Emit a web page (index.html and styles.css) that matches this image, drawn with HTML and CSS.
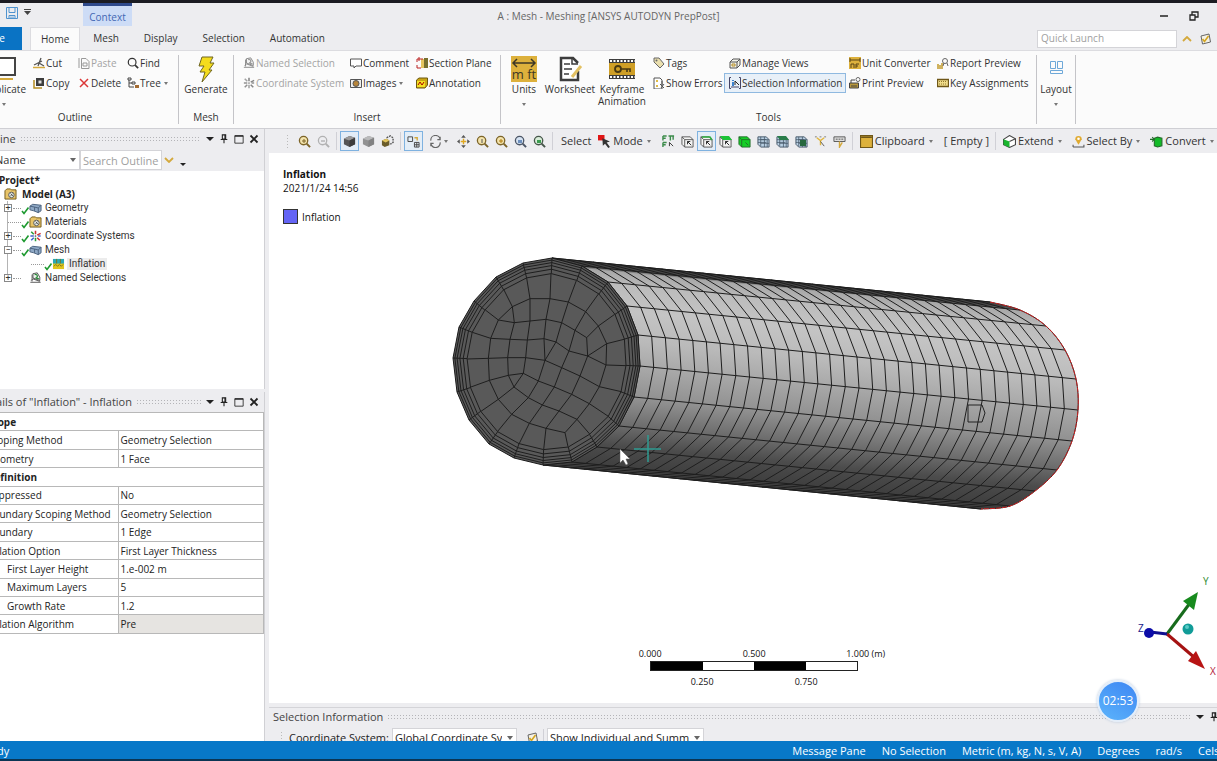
FILE: index.html
```
<!DOCTYPE html>
<html lang="en">
<head>
    <meta charset="UTF-8">
    <meta name="viewport" content="width=device-width, initial-scale=1.0">
    <title>A : Mesh - Meshing</title>
    <link rel="stylesheet" href="styles.css">
</head>
<body>
    <!-- Shared icons -->
    <svg class="sprite" aria-hidden="true">
        <symbol id="i-lens" viewBox="0 0 14 14"><circle cx="6" cy="6" r="4.500" stroke="currentColor" stroke-width="1.400"/><path d="M9.400 9.400L13 13" stroke="currentColor" stroke-width="2"/></symbol>
        <symbol id="i-cube" viewBox="0 0 14 14"><path d="M1 4l6-3 6 2v7l-6 3-6-3z" fill="#555"/><path d="M1 4l6-3 6 2-6 3z" fill="#999"/><path d="M7 6l6-3v7l-6 3z" fill="#3c3c3c"/></symbol>
        <symbol id="i-pin" viewBox="0 0 10 12"><path d="M3 1h4v5H3zM1 6.500h8M5 7v4" fill="none" stroke="#222" stroke-width="1.300"/><path d="M5.500 1h1.500v5H5.500z" fill="#222"/></symbol>
        <symbol id="i-box" viewBox="0 0 12 12"><path d="M1 2h10v9H1z" fill="none" stroke="#222"/><path d="M1 2.500h10" stroke="#222" stroke-width="1.500"/></symbol>
        <symbol id="i-x" viewBox="0 0 10 10"><path d="M1.500 1.500l7 7M8.500 1.500l-7 7" stroke="#222" stroke-width="1.800"/></symbol>
        <symbol id="i-selbox" viewBox="0 0 14 14"><path d="M1 2h9l3 3v8H4L1 10z" fill="#f4f4f4" stroke="#555"/><path d="M1 2l3 3h9M4 5v8" fill="none" stroke="#555"/><path d="M7 7l4 4M7 7v3M7 7h3" stroke="#222" fill="none"/></symbol>
        <symbol id="i-mesh" viewBox="0 0 14 14"><path d="M1 2h9l3 3v8H4L1 10z" fill="#b9cfe2" stroke="#456"/><path d="M1 5h9M1 8h9M4 2v10M8 2v11M4 5h9M11 5v8M4 9h9" fill="none" stroke="#456" stroke-width=".8"/></symbol>
        <symbol id="i-check" viewBox="0 0 12 12"><path d="M2 3l8-2 1.500 8-8 2z" fill="#f4f1e6" stroke="#666"/><path d="M3.500 6l2 2.500L9.500 3" fill="none" stroke="#d4a520" stroke-width="1.600"/></symbol>
        <symbol id="i-tick" viewBox="0 0 8 8"><path d="M1 4.500l2 2.500L7.500 1" fill="none" stroke="#1e9a30" stroke-width="1.600"/></symbol>
        <symbol id="i-body" viewBox="0 0 14 12"><path d="M1 4l3-2 9 1v6l-3 2-5-2-4-1z" fill="#8fa9c6" stroke="#48607c"/><path d="M1 4l5 1 4 1 3-3M6 5v4M10 6v5" fill="none" stroke="#48607c"/></symbol>
        <symbol id="i-folder" viewBox="0 0 14 13"><path d="M1 3l2-2h4l1 1h5v10H1z" fill="#e8c468" stroke="#6f5718"/><circle cx="8" cy="7.500" r="3" fill="#e8efe8" stroke="#555"/><path d="M7 6l3 3M9 6l-2 3" stroke="#555"/></symbol>
        <symbol id="i-axes" viewBox="0 0 14 14"><path d="M7 5V1M9 6l4-2M9 9l3 3" stroke="#c33" stroke-width="1.800"/><path d="M5 5L2 2M7 9v4" stroke="#2a9d3a" stroke-width="1.800"/><path d="M5 7H1M10 7h3M5 9l-3 3" stroke="#4365c8" stroke-width="1.800"/><circle cx="7" cy="7" r="1" fill="#555"/></symbol>
        <symbol id="i-named" viewBox="0 0 14 14"><path d="M1 12h12M2 10l2-2 8 3M3 11V3" stroke="#444" fill="none"/><path d="M4 7V2l5-1 3 5v4z" fill="#eef2ee" stroke="#444"/><path d="M6 3c4-1 4 4 1 4l4 1" stroke="#2c8c3c" fill="none" stroke-width="1.500"/></symbol>
    </svg>

    <div class="app">
        <header>
            <div class="titlebar">
                <div class="quick">
                    <svg class="save" viewBox="0 0 12 12"><path d="M.5.5h11v11H.5zM3 .5v5h6v-5M3 11.500v-3h6v3M5 9.500v2M7 9.500v2" fill="none" stroke="#4f93cf"/></svg>
                    <svg class="drop" viewBox="0 0 7 6"><path d="M0 .5h7" stroke="#444"/><path d="M0 2h7L3.500 6z" fill="#444"/></svg>
                    <span class="context">Context</span>
                </div>
                <div class="title">A : Mesh - Meshing [ANSYS AUTODYN PrepPost]</div>
                <div class="winbtns">
                    <button aria-label="Minimize"><svg width="10" height="10" viewBox="0 0 10 10"><path d="M1 5h8" stroke="#222" stroke-width="1.500"/></svg></button>
                    <button aria-label="Restore"><svg width="10" height="10" viewBox="0 0 10 10"><path d="M1 4h5v5H1zM3 4V1h6v5H6" fill="none" stroke="#222" stroke-width="1.300"/></svg></button>
                </div>
            </div>
            <nav class="tabs">
                <a href="#" class="file">File</a>
                <a href="#" class="active">Home</a>
                <a href="#">Mesh</a>
                <a href="#">Display</a>
                <a href="#">Selection</a>
                <a href="#">Automation</a>
                <input type="text" class="launch" placeholder="Quick Launch" aria-label="Quick Launch">
                <svg class="up" viewBox="0 0 10 6"><path d="M1 5l4-4 4 4" fill="none" stroke="#d4a93c" stroke-width="1.800"/></svg>
                <svg class="ic"><use href="#i-check"/></svg>
            </nav>
        </header>

        <div class="ribbon">
            <section class="group g-outline">
                <div class="tools">
                    <button class="big"><svg viewBox="0 0 26 26"><path d="M0 23h22" stroke="#d4a93c" stroke-width="2"/><path d="M3 2h21v17H3z" fill="#fff" stroke="#444" stroke-width="2"/></svg>Duplicate<i class="caret"></i></button>
                    <div class="cols">
                        <button><svg class="ic" viewBox="0 0 12 12"><path d="M0 10.500h12" stroke="#d4a93c" stroke-width="1.500"/><path d="M1 8l8-4M8 1L5 9M6 6l5 3" stroke="#555" stroke-width="1.300" fill="none"/></svg>Cut</button>
                        <button class="off"><svg class="ic" viewBox="0 0 12 12"><path d="M1 1v10M3.500 1.500H8l3 3v7H3.500z" fill="none" stroke="#999"/><path d="M5 6h4v3H5z" fill="none" stroke="#999"/></svg>Paste</button>
                        <button><svg class="ic"><use href="#i-lens"/></svg>Find</button>
                        <button><svg class="ic" viewBox="0 0 12 12"><path d="M1 3v8h8" fill="none" stroke="#b58d22" stroke-width="1.500"/><path d="M3 1h8v8H3z" fill="#3d3d3d"/><path d="M5.500 3.500h3v3h-3z" fill="#ddd"/></svg>Copy</button>
                        <button><svg class="ic" viewBox="0 0 12 12"><path d="M2 2l8 8M10 2l-8 8" stroke="#dc3737" stroke-width="1.500"/></svg>Delete</button>
                        <button><svg class="ic" viewBox="0 0 12 12"><path d="M1 1h3v2H1zM5 5h3v2H5zM2 3v7h5M2 6h3" fill="none" stroke="#444"/><path d="M8 8h4v3H8z" fill="#a36b32"/></svg>Tree<i class="caret"></i></button>
                    </div>
                </div>
                <h2>Outline</h2>
            </section>
            <section class="group g-mesh">
                <div class="tools">
                    <button class="big"><svg viewBox="0 0 26 26"><path d="M9 1h11l-3 6h4l-5 7h3L9 26l3-10H7l4-6H6z" fill="#f4dc1c" stroke="#6e6520"/></svg>Generate</button>
                </div>
                <h2>Mesh</h2>
            </section>
            <section class="group g-insert">
                <div class="tools">
                    <div class="cols">
                        <button class="off"><svg class="ic gray"><use href="#i-named"/></svg>Named Selection</button>
                        <button><svg class="ic" viewBox="0 0 12 12"><path d="M.5 2h11v7H6l-2 2V9H.5z" fill="#fff" stroke="#555"/></svg>Comment</button>
                        <button><svg class="ic" viewBox="0 0 12 12"><path d="M5 2h3v9H5z" fill="#e5c55f"/><path d="M8 1h4v10H8z" fill="#77702e"/><path d="M1 2v3M1 2h6M3 0v4M1 8v3h4" stroke="#bb2222" fill="none"/></svg>Section Plane</button>
                        <button class="off"><svg class="ic gray"><use href="#i-axes"/></svg>Coordinate System</button>
                        <button><svg class="ic" viewBox="0 0 12 12"><path d="M.5 2.500h11v8H.5z" fill="#eee" stroke="#555"/><circle cx="6" cy="6.500" r="3" fill="#b8853a" stroke="#555"/></svg>Images<i class="caret"></i></button>
                        <button><svg class="ic" viewBox="0 0 12 12"><path d="M.5 3L3 1h8.500v7L9 11H.5z" fill="#c9a414" stroke="#6e5a10"/><path d="M1 4h8v6H1z" fill="#f4e020"/><path d="M2 8l2-3 2 3 2-3" stroke="#a00" fill="none"/></svg>Annotation</button>
                    </div>
                </div>
                <h2>Insert</h2>
            </section>
            <section class="group g-tools">
                <div class="tools">
                    <button class="big units"><svg viewBox="0 0 26 26"><rect width="26" height="26" fill="#ddb13c"/><path d="M2 7h22M6 3L2 7l4 4M20 3l4 4-4 4" fill="none" stroke="#3c3726" stroke-width="1.500"/><text x="13" y="23" class="mft">m ft</text></svg>Units<i class="caret"></i></button>
                    <button class="big"><svg viewBox="0 0 26 26"><path d="M21 15v9H4V2h12l5 5" fill="#fff" stroke="#3d3d3d" stroke-width="2.500"/><path d="M15 2v6h6" fill="none" stroke="#3d3d3d" stroke-width="1.500"/><path d="M7 8h6M7 13h8M7 18h5" stroke="#3d3d3d" stroke-width="1.500"/><path d="M24 10l-9 11" stroke="#e3c163" stroke-width="3"/></svg>Worksheet</button>
                    <button class="big"><svg viewBox="0 0 26 26"><path d="M0 3h26v20H0z" fill="#3d3d3d"/><path d="M0 7h26v12H0z" fill="#cf9f26"/><path d="M1 5h25M1 21h25" stroke="#fff" stroke-width="2" stroke-dasharray="2 1.500"/><path d="M12 13h9v3M18 13v3" fill="none" stroke="#493a12" stroke-width="1.600"/><circle cx="9" cy="13" r="3" fill="none" stroke="#493a12" stroke-width="1.800"/></svg>Keyframe Animation</button>
                    <div class="cols">
                        <button><svg class="ic" viewBox="0 0 12 12"><path d="M1 1h5l5 6-4 4-6-6z" fill="#eadfae" stroke="#666"/><circle cx="3.500" cy="3.500" r="1" fill="#666"/></svg>Tags</button>
                        <button><svg class="ic" viewBox="0 0 12 12"><path d="M1 5h7v6H1zM1 5l3-3h7v6l-3 3M8 5l3-3" fill="#f3f3ea" stroke="#555"/><path d="M3 7h3v2H3z" fill="none" stroke="#b58d22"/></svg>Manage Views</button>
                        <button><svg class="ic" viewBox="0 0 12 12"><path d="M0 0h12v12H0z" fill="#ddb13c"/><path d="M1 3h10M1 1v4M11 1v4M2 11V7h3v4M7 11V7h3M7 9h2" stroke="#5a4514" fill="none"/></svg>Unit Converter</button>
                        <button><svg class="ic" viewBox="0 0 12 12"><path d="M1 7v5M3 8v4M5 6v6" stroke="#c29b2c" stroke-width="1.500"/><circle cx="8" cy="4" r="2.500" fill="none" stroke="#666"/><path d="M7 6l-1 3M10 6l1 3" stroke="#666"/></svg>Report Preview</button>
                        <button><svg class="ic" viewBox="0 0 12 12"><path d="M1 1h6l2 2v9H1z" fill="#fff" stroke="#555"/><path d="M3 3h2v2H3zM3 8h2v2H3z" fill="#e0bb45"/><path d="M9 4v4M7 7l4 4M11 7l-3 4" stroke="#555"/></svg>Show Errors</button>
                        <button class="picked"><svg class="ic" viewBox="0 0 12 12"><path d="M2 .5H.5v11H2M10 .5h1.500v11H10M2 10h8" fill="none" stroke="#446"/><path d="M4 3v1M4 5v4" stroke="#2b77c9" stroke-width="1.800"/><path d="M6 4l4 4M6 4v4" stroke="#222"/></svg>Selection Information</button>
                        <button><svg class="ic" viewBox="0 0 12 12"><path d="M.5 6h9v5h-9z" fill="#b8983c" stroke="#444"/><path d="M2 6V3h4M2 9h6" stroke="#444" fill="none"/><circle cx="9" cy="2.500" r="2" fill="#fff" stroke="#666"/></svg>Print Preview</button>
                        <button><svg class="ic" viewBox="0 0 12 12"><path d="M.5 2.500h11v7H.5z" fill="#f1dd8a" stroke="#6f5718" stroke-width="1.300"/><path d="M2 4.500h8M2 7h8" stroke="#8f752c" stroke-dasharray="1 1"/></svg>Key Assignments</button>
                    </div>
                </div>
                <h2>Tools</h2>
            </section>
            <section class="group g-layout">
                <div class="tools">
                    <button class="big"><svg viewBox="0 0 26 26"><path d="M7.500 5.500h5v7h-5zM14.500 5.500h5v7h-5zM7.500 14.500h12v3h-12z" fill="none" stroke="#6ea8d8"/></svg>Layout<i class="caret"></i></button>
                </div>
            </section>
        </div>

        <div class="work">
            <aside>
                <section class="panel outline">
                    <div class="panel-head"><span>Outline</span><i class="dots"></i><i class="caret dark"></i>
                        <svg class="pin"><use href="#i-pin"/></svg><svg class="pin"><use href="#i-box"/></svg><svg class="pin"><use href="#i-x"/></svg></div>
                    <div class="filter">
                        <span class="pick"><select aria-label="Filter by"><option>Name</option></select></span>
                        <input type="text" placeholder="Search Outline" aria-label="Search Outline">
                        <svg class="down" viewBox="0 0 10 6"><path d="M1 1l4 4 4-4" fill="none" stroke="#d4a93c" stroke-width="1.800"/></svg>
                        <i class="caret dark low"></i>
                    </div>
                    <ul class="tree">
                        <li class="root"><b>Project*</b></li>
                        <li class="model"><svg class="node"><use href="#i-folder"/></svg><b>Model (A3)</b></li>
                        <li><i class="exp">+</i><i class="stub"></i><svg class="tick"><use href="#i-tick"/></svg><svg class="node"><use href="#i-body"/></svg><span>Geometry</span></li>
                        <li><i class="stub long"></i><svg class="tick"><use href="#i-tick"/></svg><svg class="node"><use href="#i-folder"/></svg><span>Materials</span></li>
                        <li><i class="exp">+</i><i class="stub"></i><svg class="tick"><use href="#i-tick"/></svg><svg class="node"><use href="#i-axes"/></svg><span>Coordinate Systems</span></li>
                        <li><i class="exp">−</i><i class="stub"></i><svg class="tick"><use href="#i-tick"/></svg><svg class="node"><use href="#i-body"/></svg><span>Mesh</span></li>
                        <li class="child"><i class="stub"></i><svg class="tick"><use href="#i-tick"/></svg><svg class="node" viewBox="0 0 14 13"><path d="M1 1h12v6H1z" fill="#29a9b5"/><path d="M1 6h12v6H1z" fill="#dfc51d"/><path d="M2 9l2-2 2 2 2-2 2 2 2-2M5 1v5M9 1v5" stroke="#7b741b" fill="none"/></svg><span class="current">Inflation</span></li>
                        <li><i class="exp">+</i><i class="stub"></i><i class="notick"></i><svg class="node"><use href="#i-named"/></svg><span>Named Selections</span></li>
                    </ul>
                </section>
                <section class="panel details">
                    <div class="panel-head"><span>Details of "Inflation" - Inflation</span><i class="dots"></i><i class="caret dark"></i>
                        <svg class="pin"><use href="#i-pin"/></svg><svg class="pin"><use href="#i-box"/></svg><svg class="pin"><use href="#i-x"/></svg></div>
                    <table>
                        <tr><th colspan="2">Scope</th></tr>
                        <tr><td>Scoping Method</td><td>Geometry Selection</td></tr>
                        <tr><td>Geometry</td><td>1 Face</td></tr>
                        <tr><th colspan="2">Definition</th></tr>
                        <tr><td>Suppressed</td><td>No</td></tr>
                        <tr><td>Boundary Scoping Method</td><td>Geometry Selection</td></tr>
                        <tr><td>Boundary</td><td>1 Edge</td></tr>
                        <tr><td>Inflation Option</td><td>First Layer Thickness</td></tr>
                        <tr class="sub"><td>First Layer Height</td><td>1.e-002 m</td></tr>
                        <tr class="sub"><td>Maximum Layers</td><td>5</td></tr>
                        <tr class="sub"><td>Growth Rate</td><td>1.2</td></tr>
                        <tr><td>Inflation Algorithm</td><td class="locked">Pre</td></tr>
                    </table>
                </section>
            </aside>

            <main>
                <div class="toolbar">
                    <i class="grip"></i>
                    <button aria-label="Zoom in"><svg class="tan"><use href="#i-lens"/><path d="M4 6h4M6 4v4" stroke="#7c6428"/></svg></button>
                    <button aria-label="Zoom out"><svg class="gray"><use href="#i-lens"/><path d="M4 6h4" stroke="#777"/></svg></button>
                    <i class="sep"></i>
                    <button class="on" aria-label="Shaded with edges"><svg><use href="#i-cube"/></svg></button>
                    <button aria-label="Shaded"><svg class="faint"><use href="#i-cube"/></svg></button>
                    <button aria-label="Wireframe"><svg viewBox="0 0 14 14"><path d="M1 6l5-2 3 2v5l-5 2-3-2z" fill="#6b5c2a"/><path d="M1 6l5-2 3 2-4 2z" fill="#e2c45e"/><path d="M6 3l4-2 3 2v5l-3 2" fill="none" stroke="#555" stroke-dasharray="2 1" stroke-width="1.500"/></svg></button>
                    <i class="sep"></i>
                    <button class="on" aria-label="Scale"><svg viewBox="0 0 14 14"><path d="M1 2h5v5H1zM8 8h5v5H8zM10.500 8v5M8 10.500h5" fill="none" stroke="#444"/><path d="M8 3h3v3" fill="none" stroke="#d4a93c" stroke-width="1.500"/></svg></button>
                    <button class="rotate" aria-label="Rotate"><svg viewBox="0 0 14 14"><path d="M2 6a5 5 0 0 1 10-1M12 8a5 5 0 0 1-10 1M12 2v3H9M2 12V9h3" fill="none" stroke="#666" stroke-width="1.300"/></svg><i class="caret"></i></button>
                    <button aria-label="Pan"><svg viewBox="0 0 14 14"><path d="M7 0l2.500 3h-5zM7 14l2.500-3h-5zM0 7l3-2.500v5zM14 7l-3-2.500v5z" fill="#555"/><path d="M7 4v6M4 7h6" stroke="#e0a820" stroke-width="1.500"/></svg></button>
                    <button aria-label="Zoom"><svg class="tan"><use href="#i-lens"/><path d="M6 4v4" stroke="#555"/></svg></button>
                    <button aria-label="Box zoom"><svg class="tan"><use href="#i-lens"/><path d="M4 6h4M6 4v4" stroke="#b07d10"/></svg></button>
                    <button aria-label="Zoom to fit"><svg class="blue"><use href="#i-lens"/><path d="M4 5h4v3H4z" fill="#6d8fbd"/></svg></button>
                    <button aria-label="Zoom to selection"><svg class="green"><use href="#i-lens"/><path d="M4 5h4v3H4z" fill="#3c9c50"/></svg></button>
                    <i class="sep"></i>
                    <span class="lbl">Select</span>
                    <button class="text"><svg viewBox="0 0 12 12"><path d="M0 0h6v5H0z" fill="#e01515"/><path d="M4 3l7 3-3 1 3 4-1.500 1-3-4-2 2z" fill="#333"/></svg>Mode<i class="caret"></i></button>
                    <button class="first" aria-label="Filter"><svg viewBox="0 0 14 14"><path d="M1 1v5M1 1h4M1 3.500h3M7 1h6M9 1v5M12 1v4M1 8v5M1 8h4M1 10.500h3" stroke="#3b8b4a" fill="none" stroke-width="1.500"/><path d="M8 8l4 4M8 8v4" stroke="#333"/></svg></button>
                    <button aria-label="Vertex"><svg><use href="#i-selbox"/></svg></button>
                    <button class="on" aria-label="Edge"><svg><use href="#i-selbox"/><path d="M2 2h8l2 3" fill="none" stroke="#2fae40" stroke-width="1.500"/></svg></button>
                    <button aria-label="Face"><svg><use href="#i-selbox"/><path d="M1 1h9l3 4H4z" fill="#1bc336"/></svg></button>
                    <button aria-label="Body"><svg viewBox="0 0 14 14"><path d="M1 2h9l3 3v8H4L1 10z" fill="#13cf25" stroke="#246b2b"/><path d="M1 2l3 3h9M4 5v8M8 8l3 3" fill="none" stroke="#246b2b"/></svg></button>
                    <button aria-label="Node"><svg><use href="#i-mesh"/></svg></button>
                    <button aria-label="Element face"><svg><use href="#i-mesh"/><path d="M1 1h9l3 4H4z" fill="#2a7d4a"/></svg></button>
                    <button aria-label="Element"><svg><use href="#i-mesh"/><path d="M5 5h6v6H5z" fill="#27683e"/></svg></button>
                    <button aria-label="Coordinate pick"><svg viewBox="0 0 14 14"><path d="M1 2h2M6 2h2M11 2h2" stroke="#777"/><path d="M3 3l4 3 4-3M7 6v5" stroke="#e0b53c" fill="none" stroke-width="1.500"/><path d="M7 7l4 5" stroke="#555"/></svg></button>
                    <button aria-label="Label"><svg viewBox="0 0 14 14"><path d="M1 2h12v5H1z" fill="#ddd" stroke="#555"/><path d="M3 4.500h8" stroke="#555" stroke-dasharray="2 1"/><path d="M7 7v6l3-5" stroke="#d4a93c" fill="none" stroke-width="1.500"/></svg></button>
                    <i class="sep"></i>
                    <button class="text clip"><svg viewBox="0 0 12 12"><path d="M.5.5h11v11H.5z" fill="#ddb13c" stroke="#6f5718"/><path d="M1 2h10" stroke="#6f5718" stroke-width="1.500"/></svg>Clipboard<i class="caret"></i></button>
                    <span class="lbl empty">[ Empty ]</span>
                    <i class="sep"></i>
                    <button class="text clip"><svg viewBox="0 0 12 12"><path d="M.5 4L6 .5l5.500 3V9L6 11.500.5 9z" fill="#fff" stroke="#444"/><path d="M.5 4L6 6v5.500L.5 9z" fill="#19b52e"/><path d="M6 6l5.500-2.500" stroke="#444"/></svg>Extend<i class="caret"></i></button>
                    <button class="text by"><svg viewBox="0 0 12 12"><path d="M1 11V9M1 11h10V9" stroke="#555" fill="none"/><path d="M6 9L3 4a3 3 0 1 1 6 0z" fill="#e0aa30"/><circle cx="6" cy="3.500" r="1.200" fill="#fff"/></svg>Select By<i class="caret"></i></button>
                    <button class="text by"><svg viewBox="0 0 12 12"><path d="M4 3l3-1 4 1v7l-4 1-3-1z" fill="#13bb28" stroke="#246b2b"/><path d="M0 4h4M2 2l2 2-2 2" stroke="#246b2b" fill="none"/></svg>Convert<i class="caret"></i></button>
                </div>

                <div class="viewport">
                    <svg class="model-view" viewBox="269 152 948 550">
                        <defs>
                            <linearGradient id="side" gradientUnits="userSpaceOnUse" x1="600" y1="262" x2="580" y2="468">
                                <stop offset="0" stop-color="#3c3c3c"/>
                                <stop offset=".022" stop-color="#484848"/>
                                <stop offset=".035" stop-color="#a8a8a8"/>
                                <stop offset=".1" stop-color="#bcbcbc"/>
                                <stop offset=".22" stop-color="#c4c4c4"/>
                                <stop offset=".36" stop-color="#bababa"/>
                                <stop offset=".5" stop-color="#a6a6a6"/>
                                <stop offset=".64" stop-color="#909090"/>
                                <stop offset=".77" stop-color="#6c6c6c"/>
                                <stop offset=".87" stop-color="#4c4c4c"/>
                                <stop offset="1" stop-color="#3c3c3c"/>
                            </linearGradient>
                        </defs>
                        <path id="hull" fill="url(#side)" stroke="#222"/>
                        <path id="rings" class="wire"/>
                        <path id="rails" class="wire"/>
                        <path id="edge" fill="none" stroke="#c22" stroke-dasharray="5 1"/>
                        <path id="cap" fill="#595959" stroke="#1a1a1a"/>
                        <path id="layers" class="wire"/>
                        <g transform="translate(440 240) scale(.33333)">
                            <path class="wire face" d="M270 173L330 173 385 183 437 212 475 255 500 308 498 372 478 437 448 488 411 535 375 575 318 562 268 547 215 520 175 475 148 418 145 352 152 292 175 237 217 197zM217 197L223 245 210 295 203 350 205 403 222 438M270 173L270 240 262 297 257 350 250 397 295 420 343 438 395 460 448 488M330 173L318 235 312 293 315 358 295 420 265 470 215 520M385 183L365 245 348 303 315 358M437 212L405 268 387 330 365 380 343 438 307 492 268 547M175 237L223 245 270 240 318 235 365 245 405 268 440 290 443 345M475 255L440 290M500 308L443 345 498 372M152 292L210 295 262 297 312 293 348 303 387 330 443 345 420 405 395 460 357 510 318 562M145 352L203 350 257 350 315 358 365 380 420 405 478 437M148 418L205 403 250 397 222 438 175 475M222 438L265 470 307 492 357 510 411 535
                            M260 111L270 173M333 99L330 173M409 119L385 183M476 158L437 212M524 220L475 255M552 295L500 308M558 374L498 372M544 452L478 437M505 526L448 488M449 579L411 535M384 617L375 575M311 626L318 562M237 609L268 547M173 571L215 520M123 511L175 475M90 439L148 418M82 354L145 352M97 274L152 292M136 207L175 237M191 145L217 197"/>
                        </g>
                        <path d="M968 404h14l3 8-3 9h-14z" fill="none" stroke="#222"/>
                        <path d="M634 448h27M648 434v27" stroke="#2f9c92" stroke-width="1.500"/>
                        <path d="M620 448v14l3-3 3 5 2-1-2-5h4z" fill="#fff" stroke="#555" stroke-width=".5"/>
                    </svg>
                    <div class="legend">
                        <b>Inflation</b>
                        <span>2021/1/24 14:56</span>
                        <span class="key"><i></i>Inflation</span>
                    </div>
                    <div class="scale">
                        <div class="over"><span>0.000</span><span>0.500</span><span>1.000 (m)</span></div>
                        <div class="bar"><i></i><i></i><i></i><i></i></div>
                        <div class="under"><span>0.250</span><span>0.750</span></div>
                    </div>
                    <svg class="triad" viewBox="0 0 85 105">
                        <path d="M35 59L58 28" stroke="#176b1c" stroke-width="3"/><path d="M66 17L62 35 51 26z" fill="#178a1e"/>
                        <path d="M35 59L63 83" stroke="#a51212" stroke-width="3"/><path d="M73 94L56 86 64 76z" fill="#b81414"/>
                        <path d="M35 59L18 57" stroke="#101090" stroke-width="3"/><circle cx="17" cy="58" r="5" fill="#0c0ca8"/>
                        <circle cx="56" cy="54" r="5.500" fill="#119c98"/><circle cx="55" cy="52" r="2" fill="#5ccac6"/>
                        <text x="71" y="10" fill="#2a8a2e">Y</text><text x="78" y="100" fill="#b3223a">X</text><text x="6" y="57" fill="#22228a">Z</text>
                    </svg>
                </div>

                <section class="info">
                    <div class="panel-head"><span>Selection Information</span><i class="dots"></i><i class="caret dark"></i><svg class="pin"><use href="#i-pin"/></svg></div>
                    <div class="info-row">
                        <i class="grip"></i>
                        <label for="cs">Coordinate System:</label>
                        <span class="pick"><select id="cs"><option>Global Coordinate System</option></select></span>
                        <svg class="ic"><use href="#i-check"/></svg>
                        <i class="sep"></i>
                        <span class="pick wide"><select aria-label="Show"><option>Show Individual and Summary</option></select></span>
                    </div>
                </section>
                <div class="timer">02:53</div>
            </main>
        </div>

        <footer>
            <span>Ready</span>
            <span class="first">Message Pane</span>
            <span>No Selection</span>
            <span>Metric (m, kg, N, s, V, A)</span>
            <span>Degrees</span>
            <span>rad/s</span>
            <span>Celsius</span>
        </footer>
        <div class="desk"></div>
    </div>

    <script>
        // Outline of the front face, clockwise from the top
        const face = [
            [552, 257], [582, 265], [608, 281], [627, 305], [638, 334],
            [640, 365], [634, 396], [619, 425], [597, 446], [572, 461],
            [543, 464], [514, 457], [489, 443], [469, 419], [457, 391],
            [453, 357], [459, 326], [474, 300], [496, 276], [523, 262]
        ];
        const axis = [438, 44];
        const centre = [547, 361];
        const steps = 32;

        const shift = (p, t) => [p[0] + axis[0] * t, p[1] + axis[1] * t];
        const pair = p => p[0].toFixed(1) + ' ' + p[1].toFixed(1);
        const line = pts => 'M' + pts.map(pair).join('L');
        const draw = (id, d) => document.getElementById(id).setAttribute('d', d);

        function curve(pts) {
            let d = 'M' + pair(pts[0]);
            for (let i = 0; i < pts.length - 1; i++) {
                const a = pts[i - 1] || pts[i];
                const b = pts[i];
                const c = pts[i + 1];
                const e = pts[i + 2] || c;
                d += 'C' + pair([b[0] + (c[0] - a[0]) / 6, b[1] + (c[1] - a[1]) / 6]);
                d += ' ' + pair([c[0] - (e[0] - b[0]) / 6, c[1] - (e[1] - b[1]) / 6]);
                d += ' ' + pair(c);
            }
            return d;
        }

        const visible = face.slice(0, 11);
        const far = visible.map(p => shift(p, 1));

        draw('hull', curve(far) + 'L' + visible.slice().reverse().map(pair).join('L') + 'z');
        draw('edge', curve(far));
        draw('cap', line(face) + 'z');

        let rings = '';
        for (let i = 1; i < steps; i++) {
            rings += line(visible.map(p => shift(p, i / steps)));
        }
        draw('rings', rings);
        draw('rails', visible.map((p, i) => line([p, far[i]])).join(''));

        // Inflation layers, each one 1.2 times thicker than the last
        const inset = (p, k) => [centre[0] + (p[0] - centre[0]) * k, centre[1] + (p[1] - centre[1]) * k];
        let layers = '';
        [0.98, 0.956, 0.927, 0.892, 0.85].forEach(k => {
            layers += line(face.map(p => inset(p, k))) + 'z';
        });
        face.forEach(p => {
            layers += line([p, inset(p, 0.85)]);
        });
        draw('layers', layers);
    </script>
</body>
</html>
```
FILE: styles.css
```
* {
    box-sizing: border-box;
}

body {
    margin: 0;
    overflow: hidden;
    font-family: "Open Sans", "Noto Sans", sans-serif;
    font-size: 10px;
    line-height: 12px;
    color: #333;
    background: #ededf0;
}

button, input, select {
    font: inherit;
    color: inherit;
    margin: 0;
    padding: 0;
}

button {
    display: flex;
    align-items: center;
    border: 1px solid transparent;
    background: none;
    white-space: nowrap;
}

a {
    color: inherit;
    text-decoration: none;
}

i {
    font-style: normal;
    flex: none;
}

svg {
    flex: none;
    fill: none;
}

.sprite {
    position: absolute;
    width: 0;
    height: 0;
}

/* the window hangs over the left edge of the screen */
.app {
    display: flex;
    flex-direction: column;
    height: 100vh;
    margin-left: -28px;
    border-top: 3px solid #1c1c22;
}

.ic {
    width: 12px;
    height: 12px;
}

.caret {
    width: 0;
    height: 0;
    border: 2px solid transparent;
    border-top: 3px solid #777;
    border-bottom: 0;
    margin-left: 2px;
}

.caret.dark {
    border-width: 4px 4px 0;
    border-top-color: #222;
}

.gray {
    color: #999;
    filter: grayscale(1);
    opacity: .7;
}

/* title bar and tabs */
.titlebar {
    display: grid;
    grid-template-columns: 1fr auto 1fr;
    height: 24px;
    padding-left: 28px;
}

.quick {
    display: flex;
    align-items: flex-start;
}

.save {
    width: 12px;
    height: 12px;
    margin: 4px 6px 0 6px;
}

.drop {
    width: 7px;
    height: 6px;
    margin-top: 6px;
}

.context {
    width: 49px;
    height: 23px;
    margin-left: 52px;
    padding-top: 5px;
    border-top: 3px solid #2f4a8c;
    background: #cddcf6;
    color: #4468b4;
    text-align: center;
}

.title {
    padding-top: 7px;
    color: #666;
}

.winbtns {
    display: flex;
    justify-content: flex-end;
    gap: 18px;
    padding: 2px 17px 0 0;
}

.tabs {
    display: flex;
    height: 23px;
    line-height: 23px;
    align-items: center;
}

.tabs a {
    padding: 0 12px 0 13px;
}

.tabs .file {
    width: 50px;
    margin-right: 8px;
    padding: 0 0 0 17px;
    background: #0a73c4;
    color: #fff;
}

.tabs .active {
    padding: 0 10px;
    background: #fbfbfb;
    border: 1px solid #dcdce0;
    border-bottom: 0;
    line-height: 22px;
}

.launch {
    width: 140px;
    height: 18px;
    margin-left: auto;
    padding-left: 3px;
    border: 1px solid #d4d4d8;
    background: #fff;
}

::placeholder {
    color: #a0a0a0;
    opacity: 1;
}

.up {
    width: 10px;
    height: 6px;
    margin: 0 7px 0 5px;
}

.tabs .ic {
    margin-right: 6px;
}

/* ribbon */
.ribbon {
    display: flex;
    flex: none;
    height: 79px;
    background: #fbfbfb;
    border-top: 1px solid #dcdce0;
    border-bottom: 1px solid #cfcfd4;
}

.group {
    display: flex;
    flex-direction: column;
    justify-content: space-between;
    margin: 4px 0;
    border-right: 1px solid #c4c4c8;
}

.group h2 {
    margin: 0;
    font-size: 10px;
    font-weight: 400;
    text-align: center;
    line-height: 14px;
}

.tools {
    display: flex;
    align-items: flex-start;
}

.g-outline { width: 207px; }
.g-mesh { width: 55px; }
.g-insert { width: 267px; }
.g-tools { width: 536px; }
.g-layout { width: 39px; }

.cols {
    display: grid;
    grid-auto-rows: 20px;
    margin-top: -2px;
}

.cols button {
    gap: 1px;
}

.g-outline .cols {
    grid-template-columns: 45px 49px 45px;
    margin-left: 3px;
}

.g-insert .cols {
    grid-template-columns: 107px 66px 80px;
    margin-left: 8px;
}

.g-tools .cols {
    grid-template-columns: 76px 120px 88px 92px;
    margin-left: 4px;
}

.off {
    color: #a4a4a4;
}

.cols .picked {
    margin: 0 2px 0 -4px;
    padding-left: 4px;
    border-color: #8fb9e0;
    background: #e8f0f8;
}

.big {
    flex-direction: column;
    width: 52px;
    white-space: normal;
    color: #333;
}

.big svg {
    width: 26px;
    height: 26px;
    margin-bottom: 1px;
}

.big .caret {
    margin: 8px 0 0;
}

.g-outline .big {
    width: 50px;
    margin-left: 7px;
}

.g-mesh .big {
    width: 54px;
}

.g-tools .units {
    width: 34px;
    margin: 0 3px 0 6px;
}

.g-layout .big {
    width: 38px;
}

.mft {
    font-size: 13px;
    text-anchor: middle;
    fill: #3c3726;
}

/* work area */
.work {
    display: flex;
    flex: 1;
    min-height: 0;
}

aside {
    display: flex;
    flex-direction: column;
    width: 293px;
    flex: none;
}

.panel {
    display: flex;
    flex-direction: column;
    background: #fff;
    border-right: 1px solid #d0d0d4;
}

.outline {
    flex: 0 1 260px;
    margin-bottom: 3px;
}

.details {
    flex: 1;
}

.panel-head {
    display: flex;
    align-items: center;
    flex: none;
    height: 20px;
    padding: 0 5px 0 6px;
    background: #ededf0;
    font-size: 11px;
    color: #444;
    white-space: nowrap;
}

.dots {
    flex: 1;
    height: 6px;
    margin: 0 3px 0 4px;
    background: radial-gradient(#b4b4b8 1px, transparent 1px) 0 0 / 3px 3px;
}

.pin {
    width: 10px;
    height: 10px;
    margin-left: 5px;
}

.filter {
    display: flex;
    align-items: center;
    height: 22px;
    flex: none;
    background: #ededf0;
    font-size: 11px;
}

.pick {
    position: relative;
    display: block;
}

.pick::after {
    content: "";
    position: absolute;
    right: 4px;
    top: 8px;
    border: 3px solid transparent;
    border-top: 4px solid #666;
    border-bottom: 0;
    pointer-events: none;
}

.pick select {
    display: block;
    width: 100%;
    height: 20px;
    appearance: none;
    border: 1px solid #d4d4d8;
    background: #fff;
}

.filter .pick {
    width: 108px;
}

.filter select {
    padding-left: 22px;
}

.filter input {
    width: 82px;
    height: 20px;
    padding-left: 2px;
    border: 1px solid #d4d4d8;
    background: #fff;
}

.down {
    width: 10px;
    height: 6px;
    margin-left: 2px;
}

.filter .low {
    border-width: 3px 3px 0;
    margin: 8px 0 0 6px;
}

.tree {
    position: relative;
    margin: 0;
    padding: 2px 0 0 32px;
    list-style: none;
    font-size: 10px;
    font-family: Roboto, "Open Sans", sans-serif;
}

.tree::before {
    content: "";
    position: absolute;
    left: 35px;
    top: 30px;
    height: 77px;
    border-left: 1px solid #b4b4b4;
}

.tree li {
    display: flex;
    align-items: center;
    height: 14px;
}

.tree b {
    font-family: "Open Sans", sans-serif;
    color: #222;
}

.tree .root {
    margin-left: -5px;
}

.model .node {
    margin-right: 5px;
}

.exp {
    position: relative;
    width: 8px;
    height: 8px;
    border: 1px solid #888;
    background: #fff;
    font-size: 9px;
    line-height: 6px;
    text-align: center;
}

.stub {
    width: 8px;
    margin-left: 1px;
    border-top: 1px dotted #999;
}

.stub.long {
    width: 13px;
    margin-left: 4px;
}

.tick, .notick {
    width: 8px;
    height: 9px;
    margin-top: 4px;
}

.node {
    width: 13px;
    height: 12px;
    margin-right: 3px;
}

.child {
    margin-left: 26px;
}

.child .stub {
    width: 13px;
}

.current {
    padding: 0 2px;
    margin-left: -1px;
    background: #ececec;
}

table {
    width: 100%;
    height: 222px;
    border-collapse: collapse;
    table-layout: fixed;
    color: #222;
}

td, th {
    padding: 0 0 0 2px;
    border: 1px solid #b8b8b8;
    text-align: left;
    white-space: nowrap;
}

td:first-child {
    width: 146px;
}

td:first-child, th {
    padding-left: 14px;
}

.sub td:first-child {
    padding-left: 34px;
}

.locked {
    background: #e6e4e1;
}

/* graphics side */
main {
    position: relative;
    display: flex;
    flex-direction: column;
    flex: 1;
    min-width: 0;
    margin-left: 4px;
}

.toolbar {
    display: flex;
    align-items: center;
    flex: none;
    height: 24px;
    padding-left: 17px;
    font-size: 11px;
    white-space: nowrap;
}

.toolbar button {
    justify-content: center;
    flex: none;
    width: 19px;
    height: 20px;
}

.toolbar svg {
    width: 13px;
    height: 13px;
}

.toolbar .on {
    border-color: #7fb2e0;
    background: #e3edf7;
}

.toolbar .text {
    width: auto;
    gap: 2px;
}

.toolbar .rotate {
    width: 31px;
}

.toolbar .first {
    margin-left: 7px;
}

.toolbar .clip {
    margin-left: 3px;
}

.toolbar .by {
    margin-left: 8px;
}

.lbl {
    margin: 0 6px 0 5px;
}

.lbl.empty {
    margin: 0 3px 0 10px;
}

.grip {
    width: 4px;
    height: 14px;
    margin-right: 5px;
    background: radial-gradient(#bbb 1px, transparent 1px) 0 0 / 3px 3px;
}

.sep {
    width: 1px;
    height: 18px;
    margin: 0 3px;
    background: #d0d0d6;
}

.tan {
    color: #7c6428;
    fill: #f3e3ac;
}

.blue {
    color: #4b5565;
    fill: #d5e2f2;
}

.green {
    color: #46564a;
    fill: #d8ecd8;
}

.faint {
    opacity: .6;
}

.viewport {
    position: relative;
    flex: 1;
    min-height: 0;
    background: #fff;
}

.model-view {
    display: block;
    width: 100%;
    height: 100%;
}

.wire {
    fill: none;
    stroke: #1e1e1e;
    stroke-width: 1;
}

.face {
    stroke-width: 3;
}

.legend {
    position: absolute;
    left: 14px;
    top: 14px;
    display: flex;
    flex-direction: column;
    line-height: 14px;
    color: #111;
}

.key {
    display: flex;
    align-items: center;
    gap: 4px;
    margin-top: 14px;
}

.key i {
    width: 15px;
    height: 15px;
    border: 1px solid #333;
    background: #6464f5;
}

.scale {
    position: absolute;
    left: 40%;
    bottom: 14px;
    width: 208px;
    margin-left: 2px;
    font-size: 9px;
    color: #111;
}

.over, .under {
    display: grid;
    grid-template-columns: repeat(3, 104px);
    text-align: center;
    line-height: 14px;
}

.over {
    margin-left: -52px;
}

.over span:last-child {
    padding-left: 15px;
}

.under {
    grid-template-columns: repeat(2, 104px);
    margin-top: 4px;
}

.bar {
    display: flex;
    height: 10px;
    border: 1px solid #222;
}

.bar i {
    flex: 1;
}

.bar i:nth-child(odd) {
    background: #000;
}

.triad {
    position: absolute;
    right: 0;
    bottom: 23px;
    width: 85px;
    height: 105px;
    font-size: 10px;
}

.info {
    flex: none;
    height: 38px;
    padding-top: 4px;
    overflow: hidden;
}

.info .panel-head {
    height: 19px;
    border-top: 1px solid #d4d4d8;
    padding: 0 0 0 4px;
    margin-right: -2px;
}

.info-row {
    display: flex;
    align-items: center;
    margin-top: 2px;
    padding-left: 11px;
    font-size: 11px;
    color: #222;
}

.info-row .pick {
    width: 125px;
    margin-left: 3px;
}

.info-row .wide {
    width: 157px;
    margin-left: 0;
}

.info-row select {
    padding: 0 14px 0 2px;
}

.info-row .ic {
    margin: 0 2px 0 9px;
}

.timer {
    position: absolute;
    right: 78px;
    bottom: 19px;
    width: 42px;
    height: 42px;
    border: 2px solid #e4eefa;
    border-radius: 50%;
    background: linear-gradient(30deg, #5cb4fb, #3d86f3);
    box-shadow: 0 0 3px #b8c8dc;
    color: #fff;
    font-size: 12px;
    line-height: 38px;
    text-align: center;
}

footer {
    display: flex;
    align-items: center;
    flex: none;
    gap: 16px;
    height: 18px;
    margin-right: -17px;
    padding: 2px 0 0 6px;
    background: #0878c8;
    color: #fff;
    font-size: 11px;
    line-height: 16px;
    white-space: nowrap;
    overflow: hidden;
}

footer .first {
    margin-left: auto;
}

.desk {
    flex: none;
    height: 2px;
    background: #0b3554;
}
```
